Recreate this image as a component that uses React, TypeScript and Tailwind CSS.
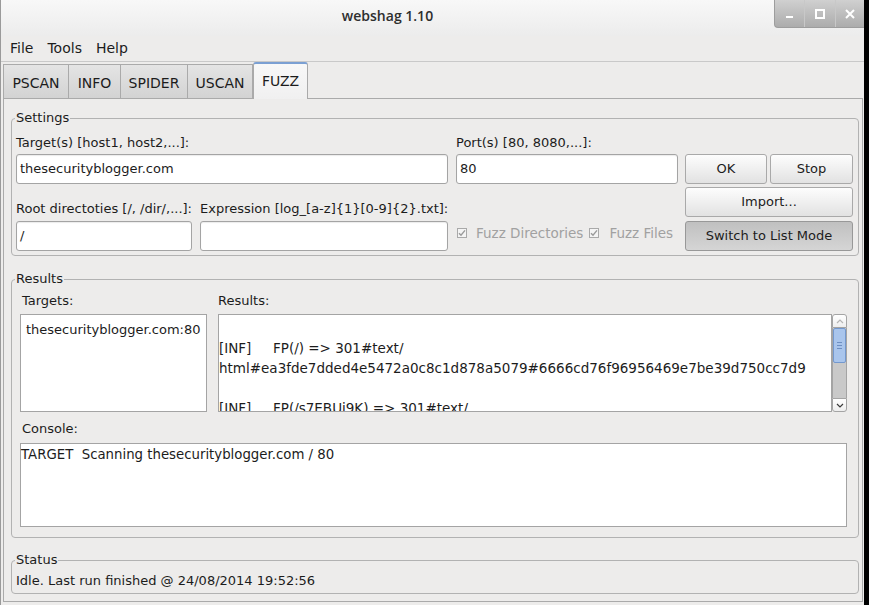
import React from "react";

const Field = ({ value, className = "" }: { value?: string; className?: string }) => (
  <div
    className={`flex h-[30px] items-center rounded-[3px] border border-[#a4a4a4] bg-white pl-[3px] shadow-[inset_0_1px_1px_rgba(0,0,0,0.08)] ${className}`}
  >
    {value}
  </div>
);

const Btn = ({ label, pressed, className = "" }: { label: string; pressed?: boolean; className?: string }) => (
  <div
    className={`flex h-[30px] items-center justify-center rounded-[3px] border ${
      pressed
        ? "border-[#989898] bg-linear-to-b from-[#c0c0c0] to-[#d5d5d5]"
        : "border-[#a9a9a9] bg-linear-to-b from-[#fdfdfd] to-[#e2e2e2]"
    } ${className}`}
  >
    {label}
  </div>
);

const Group = ({ legend, className = "", children }: { legend: string; className?: string; children: React.ReactNode }) => (
  <fieldset className={`rounded-[4px] border border-[#b2b2b2] ${className}`}>
    <legend className="ml-[3px] px-px leading-[16px]">{legend}</legend>
    {children}
  </fieldset>
);

const Check = () => (
  <svg width="10" height="10" viewBox="0 0 10 10" className="shrink-0">
    <rect x="0.5" y="0.5" width="9" height="9" fill="#f4f4f4" stroke="#a9a9a9" />
    <path d="M2 5.2 L4 7.3 L8 2.4" fill="none" stroke="#9a9a9a" strokeWidth="1.4" />
  </svg>
);

const tabs = [
  { name: "PSCAN", w: "w-[65px]" },
  { name: "INFO", w: "w-[52px]" },
  { name: "SPIDER", w: "w-[67px]" },
  { name: "USCAN", w: "w-[66px]" },
];

export default function App() {
  return (
    <div className="flex h-[605px] w-[869px] bg-black font-['DejaVu_Sans',sans-serif] text-[13px] leading-[16px] text-[#1c1c1c]">
      <div className="flex h-full w-[864px] flex-col border-l border-[#9a9a9a] bg-[#edeceb]">
        {/* title bar */}
        <div className="flex h-[36px] shrink-0 items-start bg-linear-to-b from-[#f8f8f8] to-[#ececec]">
          <div className="flex h-[32px] flex-1 items-center justify-center font-['Open_Sans',sans-serif] text-[14px] font-semibold text-[#2e2e2e]">
            webshag 1.10
          </div>
          <div className="flex h-[28px] w-[90px] overflow-hidden rounded-bl-[4px] border-b border-l border-[#9d9d9d] bg-linear-to-b from-[#d0d0d0] to-[#acacac]">
            <div className="flex w-[30px] items-center justify-center border-r border-[#c8c8c8]">
              <svg width="10" height="10" viewBox="0 0 10 10">
                <rect x="1" y="7" width="7" height="2" fill="#fff" />
              </svg>
            </div>
            <div className="flex w-[31px] items-center justify-center border-r border-[#c8c8c8]">
              <svg width="10" height="10" viewBox="0 0 10 10">
                <rect x="1" y="1" width="8" height="8" fill="none" stroke="#fff" strokeWidth="2" />
              </svg>
            </div>
            <div className="flex flex-1 items-center justify-center">
              <svg width="10" height="10" viewBox="0 0 10 10">
                <path d="M1 1 L9 9 M9 1 L1 9" stroke="#fff" strokeWidth="2" />
              </svg>
            </div>
          </div>
        </div>

        {/* menu */}
        <div className="flex h-[26px] shrink-0 items-center gap-[14px] border-b border-[#c9c9c9] pb-[2px] pl-[9px] text-[14px]">
          <span>File</span>
          <span>Tools</span>
          <span>Help</span>
        </div>

        {/* tabs */}
        <div className="flex h-[36px] shrink-0 items-end pl-[2px] text-[14px]">
          {tabs.map((t, i) => (
            <div
              key={t.name}
              className={`flex h-[34px] ${t.w} items-center justify-center border-t border-l ${
                i === tabs.length - 1 ? "border-r" : ""
              } border-[#aaaaaa] bg-linear-to-b from-[#e4e4e4] to-[#d3d3d3] pt-[3px]`}
            >
              {t.name}
            </div>
          ))}
          <div className="relative z-10 -mb-px flex h-[37px] w-[55px] items-center justify-center rounded-t-[3px] border-x border-t-2 border-x-[#aaaaaa] border-t-[#7ba0d3] bg-linear-to-b from-[#f8f8f8] to-[#f0f0f0] pb-[2px]">
            FUZZ
          </div>
        </div>

        {/* panel */}
        <div className="mb-[3px] ml-[2px] mr-[1px] flex flex-1 flex-col border border-[#aaaaaa] pb-[7px] pl-[7px] pr-[3px] pt-[11px]">
          <Group legend="Settings">
            <div className="mt-[9px] flex gap-[8px] px-[4px] pb-[4px]">
              <div className="flex w-[432px] flex-col">
                <span>Target(s) [host1, host2,...]:</span>
                <Field value="thesecurityblogger.com" className="mt-[3px]" />
                <div className="mt-[17px] flex gap-[8px]">
                  <div className="flex w-[177px] flex-col">
                    <span className="whitespace-nowrap">Root directoties [/, /dir/,...]:</span>
                    <Field value="/" className="mt-[4px]" />
                  </div>
                  <div className="flex flex-1 flex-col">
                    <span className="whitespace-nowrap">Expression [log_[a-z]{"{1}"}[0-9]{"{2}"}.txt]:</span>
                    <Field className="mt-[4px]" />
                  </div>
                </div>
              </div>
              <div className="flex w-[222px] flex-col">
                <span>Port(s) [80, 8080,...]:</span>
                <Field value="80" className="mt-[3px]" />
                <div className="mt-[41px] flex items-center whitespace-nowrap pl-[1px] text-[13.5px] text-[#a1a1a1]">
                  <Check />
                  <span className="ml-[9px]">Fuzz Directories</span>
                  <span className="ml-[6px]">
                    <Check />
                  </span>
                  <span className="ml-[10px]">Fuzz Files</span>
                </div>
              </div>
              <div className="ml-[-1px] flex w-[168px] flex-col pt-[19px]">
                <div className="flex gap-[3px]">
                  <Btn label="OK" className="w-[82px]" />
                  <Btn label="Stop" className="flex-1" />
                </div>
                <Btn label="Import..." className="mt-[3px]" />
                <Btn label="Switch to List Mode" pressed className="mt-[4px]" />
              </div>
            </div>
          </Group>

          <Group legend="Results" className="mt-[15px]">
            <div className="mt-[6px] flex flex-col pb-[10px] pl-[8px] pr-[11px]">
              <div className="flex">
                <span className="w-[198px] pl-[2px]">Targets:</span>
                <span>Results:</span>
              </div>
              <div className="mt-[5px] flex h-[98px] gap-[11px]">
                <div className="w-[187px] border border-[#a4a4a4] bg-white pl-[5px] pt-[7px]">thesecurityblogger.com:80</div>
                <div className="flex flex-1">
                  <div className="flex-1 overflow-hidden border border-[#a4a4a4] bg-white pt-[3px] text-[13.5px] leading-[20px] whitespace-pre">
                    <div>&nbsp;</div>
                    <div>
                      <span className="inline-block w-[54px]">[INF]</span>FP(/) =&gt; 301#text/
                    </div>
                    <div>html#ea3fde7dded4e5472a0c8c1d878a5079#6666cd76f96956469e7be39d750cc7d9</div>
                    <div>&nbsp;</div>
                    <div>
                      <span className="inline-block w-[54px]">[INF]</span>FP(/s7EBUi9K) =&gt; 301#text/
                    </div>
                  </div>
                  <div className="flex w-[15px] flex-col">
                    <div className="flex h-[14px] items-center justify-center rounded-t-[3px] border border-[#a4a4a4] bg-linear-to-b from-white to-[#eeeeee]">
                      <svg width="8" height="5" viewBox="0 0 8 5">
                        <path d="M1 4 L4 1 L7 4" fill="none" stroke="#b5b5b5" strokeWidth="1.2" />
                      </svg>
                    </div>
                    <div className="flex flex-1 flex-col border-x border-[#a4a4a4] bg-[#c9c9c9]">
                      <div className="flex h-[35px] flex-col items-center justify-center gap-[2px] rounded-[2px] border border-[#7398ce] bg-[#a9c5ec]">
                        <div className="h-px w-[5px] bg-[#6e8fc2]" />
                        <div className="h-px w-[5px] bg-[#6e8fc2]" />
                        <div className="h-px w-[5px] bg-[#6e8fc2]" />
                      </div>
                    </div>
                    <div className="flex h-[14px] items-center justify-center rounded-b-[3px] border border-[#a4a4a4] bg-linear-to-b from-white to-[#eeeeee]">
                      <svg width="8" height="5" viewBox="0 0 8 5">
                        <path d="M1 1 L4 4 L7 1" fill="none" stroke="#3a3a3a" strokeWidth="1.2" />
                      </svg>
                    </div>
                  </div>
                </div>
              </div>
              <span className="mt-[9px] pl-[2px]">Console:</span>
              <div className="mt-[6px] h-[84px] border border-[#a4a4a4] bg-white pt-[3px] text-[13.3px] whitespace-pre">
                TARGET  Scanning thesecurityblogger.com / 80
              </div>
            </div>
          </Group>

          <Group legend="Status" className="mt-[14px]">
            <div className="mt-[5px] pb-[4px] pl-[4px]">Idle. Last run finished @ 24/08/2014 19:52:56</div>
          </Group>
        </div>
      </div>
    </div>
  );
}
